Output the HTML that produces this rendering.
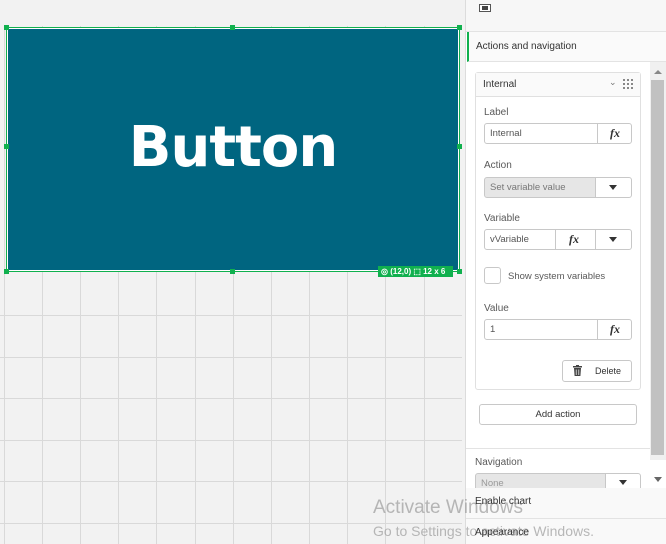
<html><head><style>
*{box-sizing:border-box;margin:0;padding:0}
body{width:666px;height:544px;overflow:hidden;position:relative;background:#f2f2f2;font-family:"Liberation Sans",sans-serif;color:#404040}
.a{position:absolute}
.t{font-size:10px;color:#595959}
.inp{position:absolute;border:1px solid #c8c8c8;border-radius:3px;background:#fff;height:21px;font-size:9.5px;color:#555;line-height:19px;padding-left:5px}
.sep{position:absolute;top:0;bottom:0;border-left:1px solid #c8c8c8}
.fx{position:absolute;font-family:"Liberation Serif",serif;font-style:italic;font-weight:bold;font-size:12px;color:#333}
.tri{position:absolute;width:0;height:0;border-left:4px solid transparent;border-right:4px solid transparent;border-top:5px solid #333}
.h{position:absolute;width:5px;height:5px;background:#10b04e}
</style></head><body>
<svg class="a" style="left:0;top:0" width="466" height="544">
<g stroke="#d9d9d9" stroke-width="1">
<line x1="4.5" y1="0" x2="4.5" y2="544"/><line x1="42.5" y1="0" x2="42.5" y2="544"/><line x1="80.5" y1="0" x2="80.5" y2="544"/><line x1="118.5" y1="0" x2="118.5" y2="544"/><line x1="156.5" y1="0" x2="156.5" y2="544"/><line x1="195.5" y1="0" x2="195.5" y2="544"/><line x1="233.5" y1="0" x2="233.5" y2="544"/><line x1="271.5" y1="0" x2="271.5" y2="544"/><line x1="309.5" y1="0" x2="309.5" y2="544"/><line x1="347.5" y1="0" x2="347.5" y2="544"/><line x1="385.5" y1="0" x2="385.5" y2="544"/><line x1="424.5" y1="0" x2="424.5" y2="544"/>
<line x1="0" y1="315.5" x2="462" y2="315.5"/><line x1="0" y1="357.5" x2="462" y2="357.5"/><line x1="0" y1="398.5" x2="462" y2="398.5"/><line x1="0" y1="440.5" x2="462" y2="440.5"/><line x1="0" y1="481.5" x2="462" y2="481.5"/><line x1="0" y1="523.5" x2="462" y2="523.5"/>
</g>
<rect x="0" y="0" width="466" height="26" fill="#f2f2f2"/>
<line x1="465.5" y1="0" x2="465.5" y2="544" stroke="#dcdcdc"/>
</svg>
<div class="a" style="left:6px;top:27px;width:454px;height:245px;border:1px solid #10b04e;background:#fff;padding:1px">
<div style="width:100%;height:100%;background:#006580;color:#fff;font-family:'DejaVu Sans',sans-serif;font-weight:bold;font-size:56px;text-align:center;line-height:238px;letter-spacing:-1px">Button</div></div>
<div class="h" style="left:4px;top:25px"></div><div class="h" style="left:230px;top:25px"></div><div class="h" style="left:457px;top:25px"></div>
<div class="h" style="left:4px;top:144px"></div><div class="h" style="left:457px;top:144px"></div>
<div class="h" style="left:4px;top:269px"></div><div class="h" style="left:230px;top:269px"></div><div class="h" style="left:457px;top:269px"></div>
<div class="a" style="left:378px;top:275px;width:75px;height:11px;margin-top:-9px;background:#10b04e;color:#fff;font-size:8px;font-weight:bold;line-height:11px;padding-left:3px">◎ (12,0) ⬚ 12 x 6</div>

<div class="a" style="left:466px;top:0;width:200px;height:544px;background:#fff">
<div class="a" style="left:0;top:0;width:200px;height:32px;background:#f7f7f7;border-bottom:1px solid #e3e3e3"></div>
<div class="a" style="left:13px;top:4px;width:12px;height:8px;border:1px solid #555;background:#fff"><div style="margin:1px 2px;height:4px;background:#444"></div></div>
<div class="a" style="left:1px;top:32px;width:199px;height:30px;border-left:2px solid #10b04e;border-bottom:1px solid #e3e3e3;background:#fafafa;font-size:10px;line-height:29px;padding-left:7px;color:#333">Actions and navigation</div>
<div class="a" style="left:184px;top:62px;width:16px;height:398px;background:#f0f0f0"></div>
<div class="a" style="left:185px;top:80px;width:13px;height:375px;background:#c1c1c1"></div>
<div class="tri" style="left:188px;top:70px;border-top:0;border-bottom:4px solid #888"></div>
<div class="tri" style="left:188px;top:477px;border-top-color:#666"></div>
<div class="a" style="left:9px;top:72px;width:166px;height:318px;border:1px solid #e0e0e0;border-radius:3px"></div>
<div class="a" style="left:10px;top:73px;width:164px;height:24px;border-bottom:1px solid #e0e0e0;background:#fafafa"></div>
<div class="a" style="left:17px;top:79px;font-size:10px;color:#333">Internal</div>
<div class="a" style="left:143px;top:77px;font-size:9px;color:#777">⌄</div>
<svg class="a" style="left:157px;top:79px" width="10" height="12"><g fill="#888"><rect x="0" y="0" width="2" height="2"/><rect x="4" y="0" width="2" height="2"/><rect x="8" y="0" width="2" height="2"/><rect x="0" y="4" width="2" height="2"/><rect x="4" y="4" width="2" height="2"/><rect x="8" y="4" width="2" height="2"/><rect x="0" y="8" width="2" height="2"/><rect x="4" y="8" width="2" height="2"/><rect x="8" y="8" width="2" height="2"/></g></svg>
<div class="a t" style="left:18px;top:107px">Label</div>
<div class="inp" style="left:18px;top:123px;width:148px">Internal<div class="sep" style="left:112px"></div><span class="fx" style="left:125px;top:0">fx</span></div>
<div class="a t" style="left:18px;top:160px">Action</div>
<div class="inp" style="left:18px;top:177px;width:148px;background:linear-gradient(90deg,#e6e6e6 110px,#fff 110px);color:#777">Set variable value<div class="sep" style="left:110px"></div><div class="tri" style="left:124px;top:7px"></div></div>
<div class="a t" style="left:18px;top:213px">Variable</div>
<div class="inp" style="left:18px;top:229px;width:148px">vVariable<div class="sep" style="left:70px"></div><span class="fx" style="left:84px;top:0">fx</span><div class="sep" style="left:110px"></div><div class="tri" style="left:124px;top:7px"></div></div>
<div class="a" style="left:18px;top:267px;width:17px;height:17px;border:1px solid #c8c8c8;border-radius:3px"></div>
<div class="a t" style="left:42px;top:271px;font-size:9.5px">Show system variables</div>
<div class="a t" style="left:18px;top:303px">Value</div>
<div class="inp" style="left:18px;top:319px;width:148px">1<div class="sep" style="left:112px"></div><span class="fx" style="left:125px;top:0">fx</span></div>
<div class="a" style="left:96px;top:360px;width:70px;height:22px;border:1px solid #c8c8c8;border-radius:3px;font-size:9px;color:#333;line-height:20px;padding-left:32px">Delete</div>
<svg class="a" style="left:107px;top:365px" width="9" height="11"><rect x="0" y="1" width="9" height="1.5" fill="#444"/><rect x="3" y="0" width="3" height="1" fill="#444"/><path d="M1 3h7l-.6 8H1.6z" fill="#444"/><g stroke="#fff" stroke-width=".7"><line x1="3.2" y1="4.5" x2="3.2" y2="10"/><line x1="5.8" y1="4.5" x2="5.8" y2="10"/></g></svg>
<div class="a" style="left:13px;top:404px;width:158px;height:21px;border:1px solid #c8c8c8;border-radius:3px;font-size:9.5px;color:#333;text-align:center;line-height:19px">Add action</div>
<div class="a" style="left:0;top:448px;width:184px;border-top:1px solid #e3e3e3"></div>
<div class="a t" style="left:9px;top:457px">Navigation</div>
<div class="inp" style="left:9px;top:473px;width:166px;height:20px;background:linear-gradient(90deg,#e6e6e6 129px,#fff 129px);color:#999">None<div class="sep" style="left:129px"></div><div class="tri" style="left:143px;top:6px"></div></div>
<div class="a" style="left:0;top:488px;width:200px;height:56px;background:#f9f9f9"></div>
<div class="a" style="left:0;top:518px;width:200px;border-top:1px solid #e3e3e3"></div>
</div>
<div class="a" style="left:373px;top:497px;font-size:19px;color:rgba(160,160,160,.75);white-space:nowrap">Activate Windows</div>
<div class="a" style="left:373px;top:523px;font-size:14px;color:rgba(160,160,160,.75);white-space:nowrap">Go to Settings to activate Windows.</div>
<div class="a" style="left:475px;top:496px;font-size:10px;color:#333">Enable chart</div>
<div class="a" style="left:475px;top:527px;font-size:10px;color:#333">Appearance</div>
</body></html>
